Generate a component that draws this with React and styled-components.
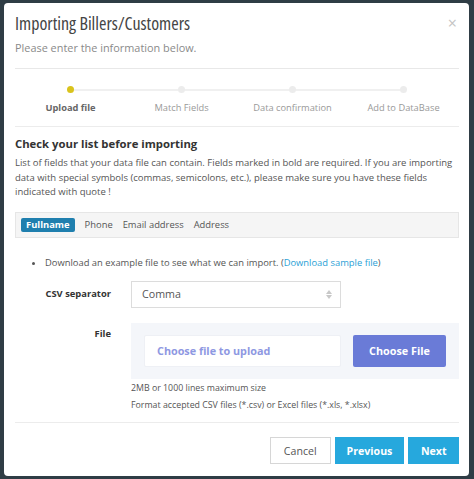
import React from "react";
import styled, { createGlobalStyle } from "styled-components";

const GlobalStyle = createGlobalStyle`
  html, body {
    margin: 0;
    padding: 0;
    background: #2f3d45;
  }
  body {
    font-family: "Open Sans", "Noto Sans", sans-serif;
    color: #555;
  }
`;

const Backdrop = styled.div`
  padding: 3px 5px 3px 4px;
`;

const Modal = styled.div`
  background: #fff;
  border-radius: 4px;
  height: 473px;
  box-sizing: border-box;
  padding: 0 10px 0 11px;
  display: flex;
  flex-direction: column;
`;

const Header = styled.div`
  position: relative;
  padding: 8px 0 12px;
  border-bottom: 1px solid #e8e8e8;
`;

const Title = styled.h1`
  margin: 0;
  font-size: 18px;
  font-stretch: 85%;
  font-weight: 400;
  line-height: 24px;
  color: #444;
`;

const Subtitle = styled.p`
  margin: 5px 0 0;
  font-size: 10.9px;
  line-height: 16px;
  color: #8a8a8a;
`;

const Close = styled.span`
  position: absolute;
  right: 2px;
  top: 9px;
  font-size: 16px;
  color: #c4c4c4;
`;

const Steps = styled.div`
  display: grid;
  grid-template-columns: repeat(4, 1fr);
  padding: 17px 0 11px;
  border-bottom: 1px solid #ececec;
`;

const Step = styled.div`
  position: relative;
  display: flex;
  flex-direction: column;
  align-items: center;

  &::after {
    content: "";
    display: ${p => (p.last ? "none" : "block")};
    position: absolute;
    top: 3px;
    left: 50%;
    width: 100%;
    height: 2px;
    background: #f0f0f0;
  }
`;

const Dot = styled.span`
  position: relative;
  z-index: 1;
  width: 7px;
  height: 7px;
  border-radius: 50%;
  background: ${p => (p.active ? "#d9c31c" : "#ececec")};
`;

const StepLabel = styled.span`
  margin-top: 8px;
  font-size: 9.3px;
  line-height: 14px;
  font-weight: ${p => (p.active ? 700 : 400)};
  color: ${p => (p.active ? "#666" : "#999")};
`;

const Body = styled.div`
  flex: 1;
  padding-top: 8px;
  border-bottom: 1px solid #ececec;
`;

const Heading = styled.h2`
  margin: 0;
  font-size: 11.3px;
  line-height: 18px;
  font-weight: 700;
  color: #333;
`;

const Text = styled.p`
  margin: 3px 0 0;
  font-size: 9.5px;
  line-height: 14.6px;
  color: #555;
`;

const FieldList = styled.div`
  margin-top: 12px;
  height: 26px;
  box-sizing: border-box;
  background: #f5f5f5;
  border: 1px solid #e6e6e6;
  display: flex;
  align-items: center;
  padding: 0 5px;
  gap: 10px;
`;

const Field = styled.span`
  font-size: 9.4px;
  line-height: 14px;
  color: #555;
  ${p =>
    p.required &&
    `
    background: #1f7fae;
    color: #fff;
    font-weight: 700;
    padding: 0 5px;
    border-radius: 2px;
  `}
`;

const Bullets = styled.ul`
  margin: 18px 0 0;
  padding-left: 30px;
  font-size: 9.4px;
  line-height: 14px;
  color: #555;
`;

const Link = styled.a`
  color: #2a9fd6;
  text-decoration: none;
`;

const FormRow = styled.div`
  display: grid;
  grid-template-columns: 96px 1fr;
  column-gap: 20px;
  margin-top: ${p => p.gap}px;
  align-items: start;
`;

const Label = styled.label`
  text-align: right;
  font-size: 9.4px;
  font-weight: 700;
  color: #333;
  line-height: 14px;
  padding-top: ${p => p.pt}px;
`;

const Select = styled.div`
  width: 210px;
  height: 27px;
  box-sizing: border-box;
  border: 1px solid #dcdcdc;
  display: flex;
  align-items: center;
  justify-content: space-between;
  padding: 0 8px 0 10px;
  font-size: 10.7px;
  color: #555;
`;

const Arrows = styled.span`
  display: flex;
  flex-direction: column;
  gap: 1px;
`;

const Arrow = styled.span`
  width: 0;
  height: 0;
  border-left: 3px solid transparent;
  border-right: 3px solid transparent;
  ${p =>
    p.up
      ? "border-bottom: 4px solid #c8c8c8;"
      : "border-top: 4px solid #c8c8c8;"}
`;

const DropZone = styled.div`
  background: #f4f6fa;
  height: 56px;
  box-sizing: border-box;
  padding: 12px 13px;
  display: flex;
  gap: 12px;
`;

const FileInput = styled.div`
  flex: 1;
  background: #fff;
  border: 1px solid #eef0f5;
  border-radius: 2px;
  display: flex;
  align-items: center;
  padding-left: 12px;
  font-size: 10.8px;
  font-weight: 700;
  color: #8e98e2;
`;

const ChooseButton = styled.button`
  width: 93px;
  border: none;
  border-radius: 2px;
  background: #6a7bd7;
  color: #fff;
  font-family: inherit;
  font-size: 10.8px;
  font-weight: 700;
`;

const Note = styled.p`
  margin: ${p => p.mt}px 0 0;
  font-size: 8.8px;
  line-height: 12px;
  color: #555;
`;

const Footer = styled.div`
  display: flex;
  justify-content: flex-end;
  gap: 4px;
  padding: 14px 0 12px;
`;

const Button = styled.button`
  height: 27px;
  box-sizing: border-box;
  padding: 0 ${p => p.px}px;
  font-family: inherit;
  font-size: 10.6px;
  border: 1px solid ${p => (p.primary ? "#26a8dd" : "#d6d6d6")};
  background: ${p => (p.primary ? "#26a8dd" : "#fff")};
  color: ${p => (p.primary ? "#fff" : "#555")};
  font-weight: ${p => (p.primary ? 700 : 400)};
`;

const steps = ["Upload file", "Match Fields", "Data confirmation", "Add to DataBase"];

export default function App() {
  return (
    <>
      <GlobalStyle />
      <Backdrop>
        <Modal>
          <Header>
            <Title>Importing Billers/Customers</Title>
            <Subtitle>Please enter the information below.</Subtitle>
            <Close>×</Close>
          </Header>

          <Steps>
            {steps.map((s, i) => (
              <Step key={s} last={i === steps.length - 1}>
                <Dot active={i === 0} />
                <StepLabel active={i === 0}>{s}</StepLabel>
              </Step>
            ))}
          </Steps>

          <Body>
            <Heading>Check your list before importing</Heading>
            <Text>
              List of fields that your data file can contain. Fields marked in bold are
              required. If you are importing data with special symbols (commas,
              semicolons, etc.), please make sure you have these fields indicated with
              quote !
            </Text>
            <FieldList>
              <Field required>Fullname</Field>
              <Field>Phone</Field>
              <Field>Email address</Field>
              <Field>Address</Field>
            </FieldList>
            <Bullets>
              <li>
                Download an example file to see what we can import. (
                <Link href="#">Download sample file</Link>)
              </li>
            </Bullets>

            <FormRow gap={11}>
              <Label pt={6}>CSV separator</Label>
              <Select>
                Comma
                <Arrows>
                  <Arrow up />
                  <Arrow />
                </Arrows>
              </Select>
            </FormRow>

            <FormRow gap={15}>
              <Label pt={4}>File</Label>
              <div>
                <DropZone>
                  <FileInput>Choose file to upload</FileInput>
                  <ChooseButton>Choose File</ChooseButton>
                </DropZone>
                <Note mt={3}>2MB or 1000 lines maximum size</Note>
                <Note mt={5}>Format accepted CSV files (*.csv) or Excel files (*.xls, *.xlsx)</Note>
              </div>
            </FormRow>
          </Body>

          <Footer>
            <Button px={13}>Cancel</Button>
            <Button primary px={11}>Previous</Button>
            <Button primary px={11.5}>Next</Button>
          </Footer>
        </Modal>
      </Backdrop>
    </>
  );
}
